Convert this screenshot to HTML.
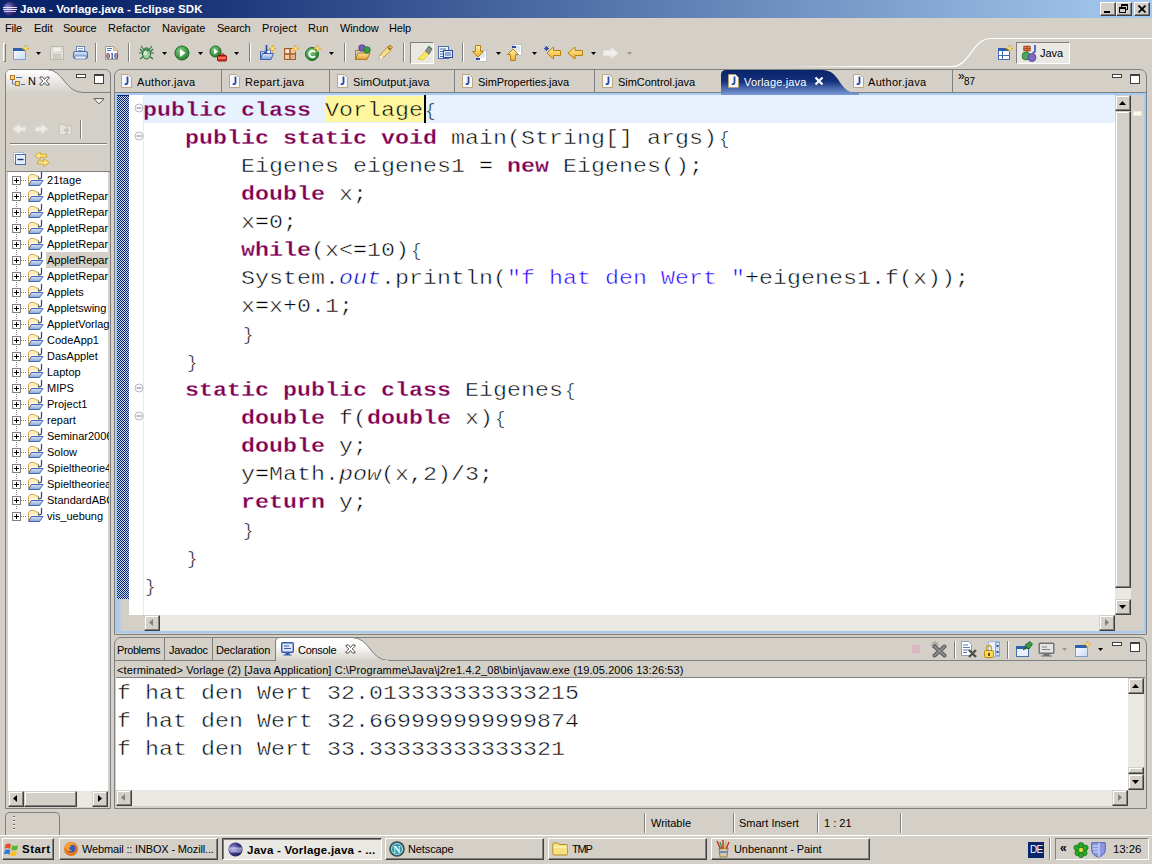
<!DOCTYPE html>
<html lang="de">
<head>
<meta charset="utf-8">
<title>Java - Vorlage.java - Eclipse SDK</title>
<style>
*{box-sizing:border-box;margin:0;padding:0}
html,body{width:1152px;height:864px;overflow:hidden;background:#d4d0c8}
body{position:relative;font-family:"Liberation Sans",sans-serif;font-size:11px;color:#000;-webkit-font-smoothing:none}
.a{position:absolute}
.t{position:absolute;white-space:pre;line-height:14px;height:14px;font-size:11px}
#title{left:0;top:0;width:1152px;height:18px;background:linear-gradient(90deg,#0a246a 0%,#0a246a 8%,#a6caf0 100%)}
#title .t{color:#fff;font-weight:bold;font-size:11.5px;left:20px;top:2px}
.wb{position:absolute;top:2px;width:16px;height:14px;background:#d4d0c8;border:1px solid;border-color:#fff #404040 #404040 #fff;box-shadow:inset -1px -1px 0 #808080}
.menu .t{top:21px;font-size:11px}
.sep{position:absolute;width:2px;border-left:1px solid #808080;border-right:1px solid #fff}
.code{position:absolute;white-space:pre;font-family:"Liberation Mono",monospace;font-size:23.33px;line-height:28px;height:28px;color:#000;transform:scaleY(.84);transform-origin:0 20.6px;-webkit-text-stroke:.55px #fff}
.k{color:#7f0055;font-weight:bold;-webkit-text-stroke-width:.3px}
.b{display:inline-block;width:14px;text-align:center;transform:scale(.72,.95);transform-origin:60% 70%}
.s{color:#2a00ff}
.i{font-style:italic}
.f{color:#0000c0;font-style:italic}
.btn{position:absolute;background:#d4d0c8;border:1px solid;border-color:#fff #404040 #404040 #fff;box-shadow:inset -1px -1px 0 #808080,inset 1px 1px 0 #d4d0c8}
.sbtn{position:absolute;width:16px;height:16px;background:#d4d0c8;border:1px solid;border-color:#d4d0c8 #404040 #404040 #d4d0c8;box-shadow:inset -1px -1px 0 #808080,inset 1px 1px 0 #fff}
.track{position:absolute;background:#eae8e3}
.tri{position:absolute;width:0;height:0}
.tree .t{font-size:11px}
</style>
</head>
<body>

<!-- ===== TITLE BAR ===== -->
<div id="title" class="a">
  <svg class="a" style="left:2px;top:1px" width="16" height="16" viewBox="0 0 16 16">
    <defs><radialGradient id="eg" cx="35%" cy="40%" r="70%"><stop offset="0" stop-color="#9a96e0"/><stop offset="0.55" stop-color="#3e388c"/><stop offset="1" stop-color="#1c1850"/></radialGradient></defs>
    <circle cx="8" cy="8" r="7" fill="url(#eg)"/>
    <rect x="1" y="6" width="14" height="1" fill="#e8e6f8"/><rect x="1" y="8" width="14" height="1" fill="#e8e6f8"/><rect x="2" y="10" width="12" height="1" fill="#cfcbee"/>
  </svg>
  <div class="t" style="left:20px;letter-spacing:0.055px">Java - Vorlage.java - Eclipse SDK</div>
  <div class="wb" style="left:1100px"><div class="a" style="left:3px;top:8px;width:6px;height:2px;background:#000"></div></div>
  <div class="wb" style="left:1116px">
    <div class="a" style="left:4px;top:1px;width:7px;height:6px;border:1px solid #000;border-top-width:2px"></div>
    <div class="a" style="left:2px;top:4px;width:7px;height:6px;border:1px solid #000;border-top-width:2px;background:#d4d0c8"></div>
  </div>
  <div class="wb" style="left:1134px">
    <svg class="a" style="left:3px;top:2px" width="9" height="8" viewBox="0 0 9 8"><path d="M0.5 0.5 L7.5 7.5 M7.5 0.5 L0.5 7.5" stroke="#000" stroke-width="1.8"/></svg>
  </div>
</div>

<!-- ===== MENU BAR ===== -->
<div class="menu">
  <div class="t" style="left:5px;letter-spacing:-0.184px">File</div>
  <div class="t" style="left:34px;letter-spacing:-0.067px">Edit</div>
  <div class="t" style="left:63px;letter-spacing:-0.227px">Source</div>
  <div class="t" style="left:108px;letter-spacing:0.115px">Refactor</div>
  <div class="t" style="left:162px">Navigate</div>
  <div class="t" style="left:217px;letter-spacing:-0.227px">Search</div>
  <div class="t" style="left:262px;letter-spacing:0.107px">Project</div>
  <div class="t" style="left:308px;letter-spacing:0.104px">Run</div>
  <div class="t" style="left:340px;letter-spacing:-0.104px">Window</div>
  <div class="t" style="left:389px;letter-spacing:-0.156px">Help</div>
</div>

<!-- TOOLBAR -->
<div id="toolbar">
  <svg width="0" height="0" style="position:absolute">
    <defs>
      <linearGradient id="gWin" x1="0" y1="0" x2="1" y2="1"><stop offset="0" stop-color="#ffffff"/><stop offset="1" stop-color="#c8dcf4"/></linearGradient>
      <linearGradient id="gYel" x1="0" y1="0" x2="0" y2="1"><stop offset="0" stop-color="#fff2a8"/><stop offset="1" stop-color="#f0b030"/></linearGradient>
      <radialGradient id="gGrn" cx="40%" cy="35%" r="70%"><stop offset="0" stop-color="#7fd27f"/><stop offset="1" stop-color="#1f7a2a"/></radialGradient>
      <linearGradient id="gFold" x1="0" y1="0" x2="0" y2="1"><stop offset="0" stop-color="#fbe29a"/><stop offset="1" stop-color="#e0a030"/></linearGradient>
      <linearGradient id="gBlue" x1="0" y1="0" x2="0" y2="1"><stop offset="0" stop-color="#dce9fb"/><stop offset="1" stop-color="#7ea2d8"/></linearGradient>
      <symbol id="dd" viewBox="0 0 5 3"><path d="M0 0h5L2.5 3z" fill="#000"/></symbol>
      <symbol id="spark" viewBox="0 0 7 7"><path d="M3.5 0v7M0 3.500h7" stroke="#e8b018" stroke-width="1.6"/><rect x="2.5" y="2.500" width="2" height="2" fill="#fff8c0"/></symbol>
    </defs>
  </svg>
  <!-- grip -->
  <div class="a" style="left:3px;top:43px;width:3px;height:19px;border:1px solid;border-color:#fff #808080 #808080 #fff"></div>
  <!-- new wizard -->
  <svg class="a" style="left:12px;top:45px" width="17" height="16" viewBox="0 0 17 16">
    <rect x="1.5" y="3.500" width="12" height="11" fill="url(#gWin)" stroke="#7f9fc8"/>
    <rect x="1" y="3" width="13" height="3" fill="#2f5fb0"/>
    <use href="#spark" x="10" y="0" width="7" height="7"/>
  </svg>
  <svg class="a" style="left:36px;top:52px" width="5" height="3"><use href="#dd" width="5" height="3"/></svg>
  <!-- save (disabled) -->
  <svg class="a" style="left:50px;top:46px" width="14" height="14" viewBox="0 0 14 14">
    <rect x="0.5" y="0.500" width="13" height="13" fill="#e4e2dc" stroke="#b8b5ac"/>
    <rect x="3" y="1" width="8" height="5" fill="#f4f3ef" stroke="#c4c1b8" stroke-width=".6"/>
    <rect x="3.5" y="8.500" width="7" height="5" fill="#cfccc4" stroke="#b8b5ac" stroke-width=".6"/>
  </svg>
  <!-- print -->
  <svg class="a" style="left:72px;top:45px" width="17" height="16" viewBox="0 0 17 16">
    <rect x="4.500" y="1.500" width="8" height="6" fill="#fff" stroke="#7088b8"/>
    <path d="M6 3.500h5M6 5.500h5" stroke="#8ea4cc" stroke-width="1"/>
    <rect x="1.500" y="6.500" width="14" height="7" rx="1.500" fill="url(#gBlue)" stroke="#4a6cb0"/>
    <rect x="3" y="11" width="11" height="3" fill="#e8f0fc" stroke="#5878b8" stroke-width=".7"/>
  </svg>
  <div class="sep" style="left:95px;top:43px;height:19px"></div>
  <!-- binary -->
  <svg class="a" style="left:104px;top:45px" width="15" height="16" viewBox="0 0 15 16">
    <path d="M1.500 1.500h8l4 4v9h-12z" fill="#fff" stroke="#9a9a9a"/>
    <path d="M9.500 1.500v4h4" fill="#e8d8a0" stroke="#c8a850" stroke-width=".8"/>
    <path d="M3 3.500h5M3 5.500h4" stroke="#4a78c0" stroke-width="1"/>
    <text x="2" y="13.500" font-family="Liberation Serif,serif" font-weight="bold" font-size="8" fill="#1a3a8a">010</text>
  </svg>
  <div class="sep" style="left:128px;top:43px;height:19px"></div>
  <!-- debug bug -->
  <svg class="a" style="left:138px;top:45px" width="17" height="16" viewBox="0 0 17 16">
    <path d="M3 1l3 4M14 1l-3 4M1 8h4M12 8h4M2 14l4-3M15 14l-4-3M2 4l3 3M15 4l-3 3" stroke="#2a6a3a" stroke-width="1.100" fill="none"/>
    <ellipse cx="8.500" cy="9" rx="4" ry="5" fill="#9fd0a0" stroke="#2a6a3a"/>
    <ellipse cx="8.500" cy="4.500" rx="2.200" ry="1.800" fill="#4a9a5a" stroke="#2a6a3a" stroke-width=".8"/>
    <ellipse cx="7.500" cy="8" rx="1.500" ry="2.500" fill="#d8f0d8"/>
  </svg>
  <svg class="a" style="left:162px;top:52px" width="5" height="3"><use href="#dd" width="5" height="3"/></svg>
  <!-- run -->
  <svg class="a" style="left:174px;top:45px" width="16" height="16" viewBox="0 0 16 16">
    <circle cx="8" cy="8" r="7" fill="url(#gGrn)" stroke="#1a6a24"/>
    <path d="M6 4l5.500 4L6 12z" fill="#fff"/>
  </svg>
  <svg class="a" style="left:198px;top:52px" width="5" height="3"><use href="#dd" width="5" height="3"/></svg>
  <!-- external tools -->
  <svg class="a" style="left:209px;top:45px" width="18" height="17" viewBox="0 0 18 17">
    <circle cx="6.500" cy="6.500" r="5.500" fill="url(#gGrn)" stroke="#1a6a24"/>
    <path d="M5 3.500l4 3-4 3z" fill="#fff"/>
    <rect x="8.500" y="10.500" width="9" height="5.500" rx="1" fill="#e03020" stroke="#8a1810"/>
    <path d="M11 10.500v-1.500h4v1.500" fill="none" stroke="#8a1810"/>
    <rect x="9" y="12.500" width="8" height="1" fill="#f8b0a0"/>
  </svg>
  <svg class="a" style="left:234px;top:52px" width="5" height="3"><use href="#dd" width="5" height="3"/></svg>
  <div class="sep" style="left:249px;top:43px;height:19px"></div>
  <!-- new java project -->
  <svg class="a" style="left:259px;top:44px" width="17" height="17" viewBox="0 0 17 17">
    <path d="M1.500 7.500h4l1-1.500h5v3" fill="#fff" stroke="#5a7ec0"/>
    <path d="M1.500 15.500l2-6h11l-2.500 6z" fill="url(#gBlue)" stroke="#3a62b0"/>
    <path d="M1.500 15.500v-8" stroke="#3a62b0"/>
    <path d="M7.500 1v6q0 2-2.500 1.500" fill="none" stroke="#2a4aa0" stroke-width="1.600"/>
    <use href="#spark" x="10" y="1" width="7" height="7"/>
  </svg>
  <!-- new package -->
  <svg class="a" style="left:283px;top:45px" width="16" height="16" viewBox="0 0 16 16">
    <rect x="1.500" y="3.500" width="11" height="11" fill="#f0c8a0" stroke="#a05a28"/>
    <path d="M7 3.500v11M1.500 9h11" stroke="#a05a28" stroke-width="1.400"/>
    <rect x="3" y="5" width="3" height="3" fill="#fbe8d4"/><rect x="8.500" y="10.500" width="3" height="3" fill="#e0a878"/>
    <use href="#spark" x="9" y="0" width="7" height="7"/>
  </svg>
  <!-- new class -->
  <svg class="a" style="left:305px;top:45px" width="16" height="16" viewBox="0 0 16 16">
    <circle cx="7" cy="9" r="6.500" fill="url(#gGrn)" stroke="#1a6a24"/>
    <path d="M10 7a3.200 3.200 0 1 0 0 4" fill="none" stroke="#fff" stroke-width="2"/>
    <use href="#spark" x="9" y="0" width="7" height="7"/>
  </svg>
  <svg class="a" style="left:329px;top:52px" width="5" height="3"><use href="#dd" width="5" height="3"/></svg>
  <div class="sep" style="left:344px;top:43px;height:19px"></div>
  <!-- open type -->
  <svg class="a" style="left:354px;top:44px" width="18" height="17" viewBox="0 0 18 17">
    <path d="M1.500 6.500h4l1-1.500h6v3" fill="#f8d880" stroke="#b07a18"/>
    <path d="M1.500 15.500l2.500-6.500h12l-3 6.500z" fill="url(#gFold)" stroke="#b07a18"/>
    <path d="M1.500 15.500v-9" stroke="#b07a18"/>
    <circle cx="8" cy="4" r="3.300" fill="#7a5ab8" stroke="#4a3088" stroke-width=".7"/>
    <circle cx="13" cy="6" r="3.300" fill="#3a9a4a" stroke="#1a6a24" stroke-width=".7"/>
  </svg>
  <!-- search torch -->
  <svg class="a" style="left:377px;top:44px" width="17" height="18" viewBox="0 0 17 18">
    <path d="M2 15l2-5 6.500-7 3.500 3.500-7 6.500z" fill="#f8dc90" stroke="#b88a30" stroke-width=".9"/>
    <path d="M10.500 3l1.500-1.500q2.500-.5 3.500 2l-1.500 2z" fill="#e8b050" stroke="#a87020" stroke-width=".9"/>
    <path d="M2 15l1.500-3.500 2.500 2.500z" fill="#fff"/>
    <circle cx="12.200" cy="4.800" r="1" fill="#805010"/>
  </svg>
  <div class="sep" style="left:403px;top:43px;height:19px"></div>
  <!-- mark occurrences (pressed toggle) -->
  <div class="a" style="left:410px;top:42px;width:24px;height:22px;background:#eae8e3;border:1px solid;border-color:#808080 #fff #fff #808080"></div>
  <svg class="a" style="left:417px;top:45px" width="16" height="17" viewBox="0 0 16 17">
    <path d="M1 14l7.500-8 3.500 3-6 6z" fill="#f8e860" stroke="#d8c020" stroke-width=".8"/>
    <path d="M8.500 6l3-4.500 3.500 2.500-3 5z" fill="#8a9098" stroke="#5a6068" stroke-width=".8"/>
    <path d="M11.500 1.500l3.500 2.500" stroke="#3a8a4a" stroke-width="1.400"/>
  </svg>
  <!-- next icon (block selection?) -->
  <svg class="a" style="left:437px;top:45px" width="17" height="16" viewBox="0 0 17 16">
    <rect x="1.500" y="1.500" width="10" height="12" fill="#eef4fc" stroke="#4a6cb0"/>
    <path d="M3 4h6M3 6.500h3M3 9h3M3 11.500h6" stroke="#4a6cb0" stroke-width="1"/>
    <rect x="6.500" y="5.500" width="9" height="7" fill="#dce8fa" stroke="#2a4aa0"/>
    <path d="M8 8h6M8 10h6" stroke="#4a6cb0" stroke-width="1"/>
  </svg>
  <div class="sep" style="left:462px;top:43px;height:19px"></div>
  <!-- next annotation -->
  <svg class="a" style="left:471px;top:44px" width="17" height="18" viewBox="0 0 17 18">
    <rect x="6.500" y="6.500" width="9" height="11" fill="#fff" stroke="#b0b8c8" stroke-width=".8"/>
    <path d="M8 9h6M8 11h6M8 13h6" stroke="#b8c4d8" stroke-width=".8"/>
    <rect x="5" y="14" width="4" height="2" fill="#2a4aa0"/>
    <path d="M4.500 1.500h5v6h3l-5.500 5.500-5.500-5.500h3z" fill="url(#gYel)" stroke="#b88010"/>
  </svg>
  <svg class="a" style="left:496px;top:52px" width="5" height="3"><use href="#dd" width="5" height="3"/></svg>
  <!-- prev annotation -->
  <svg class="a" style="left:506px;top:44px" width="17" height="18" viewBox="0 0 17 18">
    <rect x="6.500" y="0.500" width="9" height="11" fill="#fff" stroke="#b0b8c8" stroke-width=".8"/>
    <path d="M8 3h6M8 5h6M8 7h6" stroke="#b8c4d8" stroke-width=".8"/>
    <rect x="6" y="2" width="4" height="2" fill="#2a4aa0"/>
    <path d="M4.500 16.500h5v-6h3l-5.500-5.500-5.500 5.500h3z" fill="url(#gYel)" stroke="#b88010"/>
  </svg>
  <svg class="a" style="left:532px;top:52px" width="5" height="3"><use href="#dd" width="5" height="3"/></svg>
  <!-- last edit location -->
  <svg class="a" style="left:543px;top:45px" width="18" height="16" viewBox="0 0 18 16">
    <path d="M17.500 5.500h-7v-3.500l-6.500 6 6.500 6v-3.500h7z" fill="url(#gYel)" stroke="#b88010"/>
    <path d="M1 3.500h5M3.500 1v5M1.700 1.700l3.600 3.600M5.300 1.700l-3.600 3.600" stroke="#2a4aa0" stroke-width=".9"/>
  </svg>
  <!-- back -->
  <svg class="a" style="left:567px;top:45px" width="16" height="16" viewBox="0 0 16 16">
    <path d="M15.500 5.500h-7.500v-3.500l-7 6 7 6v-3.500h7.500z" fill="url(#gYel)" stroke="#b88010"/>
  </svg>
  <svg class="a" style="left:591px;top:52px" width="5" height="3"><use href="#dd" width="5" height="3"/></svg>
  <!-- forward disabled -->
  <svg class="a" style="left:603px;top:45px" width="16" height="16" viewBox="0 0 16 16">
    <path d="M0.500 5.500h7.500v-3.500l7 6-7 6v-3.500h-7.500z" fill="#f0efeb" stroke="#e4e2dc"/>
  </svg>
  <svg class="a" style="left:627px;top:52px" width="5" height="3"><path d="M0 0h5L2.500 3z" fill="#9a968e"/></svg>
</div>


<div id="persp">
  <svg class="a" style="left:780px;top:34px" width="372" height="36" viewBox="780 34 372 36">
    <defs><linearGradient id="gFade" x1="780" y1="0" x2="860" y2="0" gradientUnits="userSpaceOnUse"><stop offset="0" stop-color="#fff" stop-opacity="0"/><stop offset="1" stop-color="#fff" stop-opacity="1"/></linearGradient></defs>
    <path d="M780 66.500H860" stroke="url(#gFade)" stroke-width="1" fill="none"/>
    <path d="M860 66.500H952C970 66.500 972 38.500 991 38.500H1152" stroke="#fff" stroke-width="1.200" fill="none"/>
  </svg>
  <!-- open perspective -->
  <svg class="a" style="left:997px;top:45px" width="16" height="16" viewBox="0 0 16 16">
    <rect x="1.500" y="3.500" width="11" height="11" fill="#fff" stroke="#4a6cb0"/>
    <rect x="1" y="3" width="12" height="3" fill="#2f5fb0"/>
    <path d="M5.500 6v8.500M1.500 10.500h11" stroke="#4a6cb0"/>
    <use href="#spark" x="9" y="0" width="7" height="7"/>
  </svg>
  <!-- Java perspective button (pressed) -->
  <div class="a" style="left:1016px;top:42px;width:54px;height:22px;background:#eae8e3;border:1px solid;border-color:#808080 #fff #fff #808080"></div>
  <svg class="a" style="left:1021px;top:44px" width="18" height="18" viewBox="0 0 18 18">
    <path d="M2 4.500h8M6 1.500v7M3 2.500v4h6v-4z" stroke="#b04a28" stroke-width="1.300" fill="none"/>
    <path d="M14 1v6q0 2-2.500 1.500" fill="none" stroke="#3a5ab8" stroke-width="1.700"/>
    <circle cx="5" cy="12" r="4" fill="#4aa85a" stroke="#1a6a24" stroke-width=".7"/>
    <circle cx="11" cy="13.500" r="4" fill="#7a6ac0" stroke="#4a3088" stroke-width=".7"/>
  </svg>
  <div class="t" style="left:1040px;top:46px;font-size:11px">Java</div>
</div>

<!-- LEFT PANEL -->
<svg width="0" height="0" style="position:absolute"><defs><symbol id="proj" viewBox="0 0 17 15">
<path d="M1.500 13V4.500L3.500 2.500H7.500L9 4H11.500V8" fill="#fdf0b8" stroke="#c8a050" stroke-width=".9"/>
<path d="M3 7.500h7" stroke="#fffbe8" stroke-width="1.500"/>
<path d="M1.700 13.500L4.300 8.500H16L12.500 13.500z" fill="url(#gBlue)" stroke="#3858a8" stroke-width=".9"/>
<path d="M14.500 0V5Q14.500 6.800 12.800 6.800 11.500 6.800 11.300 5.500" fill="none" stroke="#28408c" stroke-width="1.200"/>
</symbol></defs></svg>
<div id="left">
<div class="a" style="left:5px;top:69px;width:106px;height:740px;border:1px solid #808080;border-radius:6px 6px 0 0;background:#d4d0c8"></div>
<svg class="a" style="left:5px;top:69px" width="106" height="26" viewBox="0 0 106 26">
<defs><linearGradient id="gTabL" x1="0" y1="0" x2="0" y2="1"><stop offset="0" stop-color="#ffffff"/><stop offset="1" stop-color="#d4d0c8"/></linearGradient></defs>
<path d="M1 24V6Q1 1 6 1H42C58 1 60 23.500 78 23.500V24z" fill="url(#gTabL)"/>
<path d="M42 .5C58 .5 60 23.500 78 23.500H106" fill="none" stroke="#808080"/>
</svg>
<svg class="a" style="left:10px;top:74px" width="16" height="14" viewBox="0 0 16 14">
<rect x=".5" y="1.500" width="4" height="4" fill="#f8d880" stroke="#b07a18"/>
<rect x="5.500" y="7.500" width="4" height="4" fill="#f8d880" stroke="#b07a18"/>
<path d="M2.500 6v4h3" fill="none" stroke="#6a7a9a"/><path d="M6 3.500h6M11 10.500h4" stroke="#4a6cb0"/>
</svg>
<div class="t" style="left:28px;top:74px;font-size:11px">N</div>
<svg class="a" style="left:39px;top:76px" width="11" height="10" viewBox="0 0 11 10"><path d="M1 1h2.500l2 2.500 2-2.500H10v1.200L7.200 5 10 7.800V9H7.500l-2-2.500-2 2.500H1V7.800L3.800 5 1 2.200z" fill="#fff" stroke="#404040" stroke-width=".9"/></svg>
<div class="a" style="left:76px;top:74px;width:10px;height:4px;border:1px solid #404040;background:#fff"></div>
<div class="a" style="left:94px;top:74px;width:10px;height:10px;border:1px solid #404040;border-top-width:2px;background:#fff"></div>
<svg class="a" style="left:93px;top:98px" width="12" height="7" viewBox="0 0 12 7"><path d="M1 .7h10L6 5.800z" fill="#fff" stroke="#404040" stroke-width=".9"/></svg>
<svg class="a" style="left:12px;top:123px" width="14" height="12" viewBox="0 0 14 12"><path d="M13.500 4h-6V1L.8 6l6.700 5V8h6z" fill="#ecebe6" stroke="#e0ded8"/></svg>
<svg class="a" style="left:35px;top:123px" width="14" height="12" viewBox="0 0 14 12"><path d="M.5 4h6V1l6.700 5-6.700 5V8h-6z" fill="#ecebe6" stroke="#e0ded8"/></svg>
<svg class="a" style="left:59px;top:122px" width="14" height="14" viewBox="0 0 14 14"><path d="M.5 2.500h4l1 1.500h7v8.500h-12z" fill="#e4e2dc" stroke="#c8c5bc"/><path d="M7 12V8.500h-2l2.500-3 2.500 3h-2V12" fill="#d0cdc6" stroke="#b8b5ac" stroke-width=".7"/></svg>
<div class="sep" style="left:80px;top:120px;height:19px"></div>
<div class="a" style="left:10px;top:143px;width:97px;height:2px;border-top:1px solid #808080;border-bottom:1px solid #fff"></div>
<svg class="a" style="left:13px;top:152px" width="14" height="14" viewBox="0 0 14 14">
<rect x=".5" y=".5" width="10" height="10" fill="#fff" stroke="#a8bcd8"/>
<rect x="2.500" y="2.500" width="10" height="10" fill="#e4effc" stroke="#4a6cb0"/>
<path d="M4.500 7.500h6" stroke="#1a2a6a" stroke-width="1.400"/></svg>
<svg class="a" style="left:34px;top:151px" width="16" height="16" viewBox="0 0 16 16">
<path d="M12.500 3.200H6.200V.7L.8 4.600 6.200 8.500V6H12.500z" fill="#fde88a" stroke="#d0a020" stroke-width=".9"/>
<path d="M3.500 10.200H9.800V7.700L15.200 11.600 9.800 15.500V13H3.500z" fill="#fde88a" stroke="#d0a020" stroke-width=".9"/></svg>
<div class="a" style="left:8px;top:172px;width:100px;height:619px;background:#fff"></div>
<div class="a" style="left:7px;top:171px;width:103px;height:1px;background:#808080"></div>
<div class="a" style="left:16px;top:186px;width:1px;height:324px;background:repeating-linear-gradient(180deg,#808080 0 1px,transparent 1px 2px)"></div>
<div class="tree">
<div class="a" style="left:21px;top:180px;width:6px;height:1px;background:repeating-linear-gradient(90deg,#808080 0 1px,transparent 1px 2px)"></div>
<div class="a" style="left:12px;top:176px;width:9px;height:9px;border:1px solid #808080;background:#fff"></div>
<div class="a" style="left:14px;top:180px;width:5px;height:1px;background:#000"></div><div class="a" style="left:16px;top:178px;width:1px;height:5px;background:#000"></div>
<svg class="a" style="left:27px;top:172px" width="17" height="15" viewBox="0 0 17 15"><use href="#proj"/></svg>
<div class="t" style="left:47px;top:173px;width:62px;overflow:hidden;letter-spacing:0.141px">21tage</div>
<div class="a" style="left:21px;top:196px;width:6px;height:1px;background:repeating-linear-gradient(90deg,#808080 0 1px,transparent 1px 2px)"></div>
<div class="a" style="left:12px;top:192px;width:9px;height:9px;border:1px solid #808080;background:#fff"></div>
<div class="a" style="left:14px;top:196px;width:5px;height:1px;background:#000"></div><div class="a" style="left:16px;top:194px;width:1px;height:5px;background:#000"></div>
<svg class="a" style="left:27px;top:188px" width="17" height="15" viewBox="0 0 17 15"><use href="#proj"/></svg>
<div class="t" style="left:47px;top:189px;width:62px;overflow:hidden">AppletRepar</div>
<div class="a" style="left:21px;top:212px;width:6px;height:1px;background:repeating-linear-gradient(90deg,#808080 0 1px,transparent 1px 2px)"></div>
<div class="a" style="left:12px;top:208px;width:9px;height:9px;border:1px solid #808080;background:#fff"></div>
<div class="a" style="left:14px;top:212px;width:5px;height:1px;background:#000"></div><div class="a" style="left:16px;top:210px;width:1px;height:5px;background:#000"></div>
<svg class="a" style="left:27px;top:204px" width="17" height="15" viewBox="0 0 17 15"><use href="#proj"/></svg>
<div class="t" style="left:47px;top:205px;width:62px;overflow:hidden">AppletRepar</div>
<div class="a" style="left:21px;top:228px;width:6px;height:1px;background:repeating-linear-gradient(90deg,#808080 0 1px,transparent 1px 2px)"></div>
<div class="a" style="left:12px;top:224px;width:9px;height:9px;border:1px solid #808080;background:#fff"></div>
<div class="a" style="left:14px;top:228px;width:5px;height:1px;background:#000"></div><div class="a" style="left:16px;top:226px;width:1px;height:5px;background:#000"></div>
<svg class="a" style="left:27px;top:220px" width="17" height="15" viewBox="0 0 17 15"><use href="#proj"/></svg>
<div class="t" style="left:47px;top:221px;width:62px;overflow:hidden">AppletRepar</div>
<div class="a" style="left:21px;top:244px;width:6px;height:1px;background:repeating-linear-gradient(90deg,#808080 0 1px,transparent 1px 2px)"></div>
<div class="a" style="left:12px;top:240px;width:9px;height:9px;border:1px solid #808080;background:#fff"></div>
<div class="a" style="left:14px;top:244px;width:5px;height:1px;background:#000"></div><div class="a" style="left:16px;top:242px;width:1px;height:5px;background:#000"></div>
<svg class="a" style="left:27px;top:236px" width="17" height="15" viewBox="0 0 17 15"><use href="#proj"/></svg>
<div class="t" style="left:47px;top:237px;width:62px;overflow:hidden">AppletRepar</div>
<div class="a" style="left:46px;top:252px;width:63px;height:16px;background:#d4d0c8"></div>
<div class="a" style="left:21px;top:260px;width:6px;height:1px;background:repeating-linear-gradient(90deg,#808080 0 1px,transparent 1px 2px)"></div>
<div class="a" style="left:12px;top:256px;width:9px;height:9px;border:1px solid #808080;background:#fff"></div>
<div class="a" style="left:14px;top:260px;width:5px;height:1px;background:#000"></div><div class="a" style="left:16px;top:258px;width:1px;height:5px;background:#000"></div>
<svg class="a" style="left:27px;top:252px" width="17" height="15" viewBox="0 0 17 15"><use href="#proj"/></svg>
<div class="t" style="left:47px;top:253px;width:62px;overflow:hidden">AppletRepar</div>
<div class="a" style="left:21px;top:276px;width:6px;height:1px;background:repeating-linear-gradient(90deg,#808080 0 1px,transparent 1px 2px)"></div>
<div class="a" style="left:12px;top:272px;width:9px;height:9px;border:1px solid #808080;background:#fff"></div>
<div class="a" style="left:14px;top:276px;width:5px;height:1px;background:#000"></div><div class="a" style="left:16px;top:274px;width:1px;height:5px;background:#000"></div>
<svg class="a" style="left:27px;top:268px" width="17" height="15" viewBox="0 0 17 15"><use href="#proj"/></svg>
<div class="t" style="left:47px;top:269px;width:62px;overflow:hidden">AppletRepar</div>
<div class="a" style="left:21px;top:292px;width:6px;height:1px;background:repeating-linear-gradient(90deg,#808080 0 1px,transparent 1px 2px)"></div>
<div class="a" style="left:12px;top:288px;width:9px;height:9px;border:1px solid #808080;background:#fff"></div>
<div class="a" style="left:14px;top:292px;width:5px;height:1px;background:#000"></div><div class="a" style="left:16px;top:290px;width:1px;height:5px;background:#000"></div>
<svg class="a" style="left:27px;top:284px" width="17" height="15" viewBox="0 0 17 15"><use href="#proj"/></svg>
<div class="t" style="left:47px;top:285px;width:62px;overflow:hidden">Applets</div>
<div class="a" style="left:21px;top:308px;width:6px;height:1px;background:repeating-linear-gradient(90deg,#808080 0 1px,transparent 1px 2px)"></div>
<div class="a" style="left:12px;top:304px;width:9px;height:9px;border:1px solid #808080;background:#fff"></div>
<div class="a" style="left:14px;top:308px;width:5px;height:1px;background:#000"></div><div class="a" style="left:16px;top:306px;width:1px;height:5px;background:#000"></div>
<svg class="a" style="left:27px;top:300px" width="17" height="15" viewBox="0 0 17 15"><use href="#proj"/></svg>
<div class="t" style="left:47px;top:301px;width:62px;overflow:hidden">Appletswing</div>
<div class="a" style="left:21px;top:324px;width:6px;height:1px;background:repeating-linear-gradient(90deg,#808080 0 1px,transparent 1px 2px)"></div>
<div class="a" style="left:12px;top:320px;width:9px;height:9px;border:1px solid #808080;background:#fff"></div>
<div class="a" style="left:14px;top:324px;width:5px;height:1px;background:#000"></div><div class="a" style="left:16px;top:322px;width:1px;height:5px;background:#000"></div>
<svg class="a" style="left:27px;top:316px" width="17" height="15" viewBox="0 0 17 15"><use href="#proj"/></svg>
<div class="t" style="left:47px;top:317px;width:62px;overflow:hidden">AppletVorlag</div>
<div class="a" style="left:21px;top:340px;width:6px;height:1px;background:repeating-linear-gradient(90deg,#808080 0 1px,transparent 1px 2px)"></div>
<div class="a" style="left:12px;top:336px;width:9px;height:9px;border:1px solid #808080;background:#fff"></div>
<div class="a" style="left:14px;top:340px;width:5px;height:1px;background:#000"></div><div class="a" style="left:16px;top:338px;width:1px;height:5px;background:#000"></div>
<svg class="a" style="left:27px;top:332px" width="17" height="15" viewBox="0 0 17 15"><use href="#proj"/></svg>
<div class="t" style="left:47px;top:333px;width:62px;overflow:hidden">CodeApp1</div>
<div class="a" style="left:21px;top:356px;width:6px;height:1px;background:repeating-linear-gradient(90deg,#808080 0 1px,transparent 1px 2px)"></div>
<div class="a" style="left:12px;top:352px;width:9px;height:9px;border:1px solid #808080;background:#fff"></div>
<div class="a" style="left:14px;top:356px;width:5px;height:1px;background:#000"></div><div class="a" style="left:16px;top:354px;width:1px;height:5px;background:#000"></div>
<svg class="a" style="left:27px;top:348px" width="17" height="15" viewBox="0 0 17 15"><use href="#proj"/></svg>
<div class="t" style="left:47px;top:349px;width:62px;overflow:hidden">DasApplet</div>
<div class="a" style="left:21px;top:372px;width:6px;height:1px;background:repeating-linear-gradient(90deg,#808080 0 1px,transparent 1px 2px)"></div>
<div class="a" style="left:12px;top:368px;width:9px;height:9px;border:1px solid #808080;background:#fff"></div>
<div class="a" style="left:14px;top:372px;width:5px;height:1px;background:#000"></div><div class="a" style="left:16px;top:370px;width:1px;height:5px;background:#000"></div>
<svg class="a" style="left:27px;top:364px" width="17" height="15" viewBox="0 0 17 15"><use href="#proj"/></svg>
<div class="t" style="left:47px;top:365px;width:62px;overflow:hidden">Laptop</div>
<div class="a" style="left:21px;top:388px;width:6px;height:1px;background:repeating-linear-gradient(90deg,#808080 0 1px,transparent 1px 2px)"></div>
<div class="a" style="left:12px;top:384px;width:9px;height:9px;border:1px solid #808080;background:#fff"></div>
<div class="a" style="left:14px;top:388px;width:5px;height:1px;background:#000"></div><div class="a" style="left:16px;top:386px;width:1px;height:5px;background:#000"></div>
<svg class="a" style="left:27px;top:380px" width="17" height="15" viewBox="0 0 17 15"><use href="#proj"/></svg>
<div class="t" style="left:47px;top:381px;width:62px;overflow:hidden">MIPS</div>
<div class="a" style="left:21px;top:404px;width:6px;height:1px;background:repeating-linear-gradient(90deg,#808080 0 1px,transparent 1px 2px)"></div>
<div class="a" style="left:12px;top:400px;width:9px;height:9px;border:1px solid #808080;background:#fff"></div>
<div class="a" style="left:14px;top:404px;width:5px;height:1px;background:#000"></div><div class="a" style="left:16px;top:402px;width:1px;height:5px;background:#000"></div>
<svg class="a" style="left:27px;top:396px" width="17" height="15" viewBox="0 0 17 15"><use href="#proj"/></svg>
<div class="t" style="left:47px;top:397px;width:62px;overflow:hidden">Project1</div>
<div class="a" style="left:21px;top:420px;width:6px;height:1px;background:repeating-linear-gradient(90deg,#808080 0 1px,transparent 1px 2px)"></div>
<div class="a" style="left:12px;top:416px;width:9px;height:9px;border:1px solid #808080;background:#fff"></div>
<div class="a" style="left:14px;top:420px;width:5px;height:1px;background:#000"></div><div class="a" style="left:16px;top:418px;width:1px;height:5px;background:#000"></div>
<svg class="a" style="left:27px;top:412px" width="17" height="15" viewBox="0 0 17 15"><use href="#proj"/></svg>
<div class="t" style="left:47px;top:413px;width:62px;overflow:hidden">repart</div>
<div class="a" style="left:21px;top:436px;width:6px;height:1px;background:repeating-linear-gradient(90deg,#808080 0 1px,transparent 1px 2px)"></div>
<div class="a" style="left:12px;top:432px;width:9px;height:9px;border:1px solid #808080;background:#fff"></div>
<div class="a" style="left:14px;top:436px;width:5px;height:1px;background:#000"></div><div class="a" style="left:16px;top:434px;width:1px;height:5px;background:#000"></div>
<svg class="a" style="left:27px;top:428px" width="17" height="15" viewBox="0 0 17 15"><use href="#proj"/></svg>
<div class="t" style="left:47px;top:429px;width:62px;overflow:hidden">Seminar2006</div>
<div class="a" style="left:21px;top:452px;width:6px;height:1px;background:repeating-linear-gradient(90deg,#808080 0 1px,transparent 1px 2px)"></div>
<div class="a" style="left:12px;top:448px;width:9px;height:9px;border:1px solid #808080;background:#fff"></div>
<div class="a" style="left:14px;top:452px;width:5px;height:1px;background:#000"></div><div class="a" style="left:16px;top:450px;width:1px;height:5px;background:#000"></div>
<svg class="a" style="left:27px;top:444px" width="17" height="15" viewBox="0 0 17 15"><use href="#proj"/></svg>
<div class="t" style="left:47px;top:445px;width:62px;overflow:hidden">Solow</div>
<div class="a" style="left:21px;top:468px;width:6px;height:1px;background:repeating-linear-gradient(90deg,#808080 0 1px,transparent 1px 2px)"></div>
<div class="a" style="left:12px;top:464px;width:9px;height:9px;border:1px solid #808080;background:#fff"></div>
<div class="a" style="left:14px;top:468px;width:5px;height:1px;background:#000"></div><div class="a" style="left:16px;top:466px;width:1px;height:5px;background:#000"></div>
<svg class="a" style="left:27px;top:460px" width="17" height="15" viewBox="0 0 17 15"><use href="#proj"/></svg>
<div class="t" style="left:47px;top:461px;width:62px;overflow:hidden">Spieltheorie4</div>
<div class="a" style="left:21px;top:484px;width:6px;height:1px;background:repeating-linear-gradient(90deg,#808080 0 1px,transparent 1px 2px)"></div>
<div class="a" style="left:12px;top:480px;width:9px;height:9px;border:1px solid #808080;background:#fff"></div>
<div class="a" style="left:14px;top:484px;width:5px;height:1px;background:#000"></div><div class="a" style="left:16px;top:482px;width:1px;height:5px;background:#000"></div>
<svg class="a" style="left:27px;top:476px" width="17" height="15" viewBox="0 0 17 15"><use href="#proj"/></svg>
<div class="t" style="left:47px;top:477px;width:62px;overflow:hidden">Spieltheoriea</div>
<div class="a" style="left:21px;top:500px;width:6px;height:1px;background:repeating-linear-gradient(90deg,#808080 0 1px,transparent 1px 2px)"></div>
<div class="a" style="left:12px;top:496px;width:9px;height:9px;border:1px solid #808080;background:#fff"></div>
<div class="a" style="left:14px;top:500px;width:5px;height:1px;background:#000"></div><div class="a" style="left:16px;top:498px;width:1px;height:5px;background:#000"></div>
<svg class="a" style="left:27px;top:492px" width="17" height="15" viewBox="0 0 17 15"><use href="#proj"/></svg>
<div class="t" style="left:47px;top:493px;width:62px;overflow:hidden">StandardABC</div>
<div class="a" style="left:21px;top:516px;width:6px;height:1px;background:repeating-linear-gradient(90deg,#808080 0 1px,transparent 1px 2px)"></div>
<div class="a" style="left:12px;top:512px;width:9px;height:9px;border:1px solid #808080;background:#fff"></div>
<div class="a" style="left:14px;top:516px;width:5px;height:1px;background:#000"></div><div class="a" style="left:16px;top:514px;width:1px;height:5px;background:#000"></div>
<svg class="a" style="left:27px;top:508px" width="17" height="15" viewBox="0 0 17 15"><use href="#proj"/></svg>
<div class="t" style="left:47px;top:509px;width:62px;overflow:hidden;letter-spacing:-0.028px">vis_uebung</div>
</div>
<div class="track" style="left:8px;top:791px;width:100px;height:16px"></div>
<div class="sbtn" style="left:8px;top:791px"><svg class="a" style="left:4px;top:3px" width="4" height="7"><path d="M4 0v7L0 3.500z" fill="#000"/></svg></div>
<div class="sbtn" style="left:24px;top:791px;width:53px"></div>
<div class="sbtn" style="left:92px;top:791px"><svg class="a" style="left:5px;top:3px" width="4" height="7"><path d="M0 0v7L4 3.500z" fill="#000"/></svg></div>
</div>

<!-- EDITOR -->
<div id="editor">
<div class="a" style="left:114px;top:69px;width:1033px;height:566px;border:1px solid #808080;border-radius:7px 7px 0 0;background:#d4d0c8"></div>
<div class="a" style="left:115px;top:92px;width:1031px;height:1px;background:#808080"></div>
<div class="a" style="left:115px;top:93px;width:1031px;height:540px;background:#a6caf0"></div>
<div class="a" style="left:117px;top:95px;width:1027px;height:536px;background:#d4d0c8"></div>
<div class="a" style="left:117px;top:599px;width:6px;height:32px;background:linear-gradient(90deg,#a6caf0,#d4d0c8)"></div>
<div class="a" style="left:117px;top:95px;width:12px;height:504px;background:conic-gradient(#0a246a 25%,#c4d8f6 0 50%,#0a246a 0 75%,#c4d8f6 0) 0 0/2px 2px;border-top:1px solid #0a246a"></div>
<div class="a" style="left:129px;top:95px;width:986px;height:520px;background:#fff"></div>
<div class="a" style="left:143px;top:95px;width:1px;height:520px;background:#ece9e2"></div>
<div class="a" style="left:144px;top:95px;width:971px;height:28px;background:#e8f2fe"></div>
<div class="a" style="left:326px;top:96px;width:98px;height:26px;background:#fff7a0"></div>
<div class="a" style="left:424px;top:95px;width:2px;height:28px;background:#000"></div>
<svg class="a" style="left:134px;top:103px" width="10" height="10" viewBox="0 0 10 10"><circle cx="5" cy="5" r="4" fill="#fbfcff" stroke="#b4b8c0" stroke-width="1"/><path d="M2.500 5h5" stroke="#787c84" stroke-width="1"/></svg>
<svg class="a" style="left:134px;top:131px" width="10" height="10" viewBox="0 0 10 10"><circle cx="5" cy="5" r="4" fill="#fbfcff" stroke="#b4b8c0" stroke-width="1"/><path d="M2.500 5h5" stroke="#787c84" stroke-width="1"/></svg>
<svg class="a" style="left:134px;top:383px" width="10" height="10" viewBox="0 0 10 10"><circle cx="5" cy="5" r="4" fill="#fbfcff" stroke="#b4b8c0" stroke-width="1"/><path d="M2.500 5h5" stroke="#787c84" stroke-width="1"/></svg>
<svg class="a" style="left:134px;top:411px" width="10" height="10" viewBox="0 0 10 10"><circle cx="5" cy="5" r="4" fill="#fbfcff" stroke="#b4b8c0" stroke-width="1"/><path d="M2.500 5h5" stroke="#787c84" stroke-width="1"/></svg>
<div class="code" style="left:143px;top:96px;-webkit-text-stroke-color:#e8f2fe"><span class="k">public</span> <span class="k">class</span> <span style="-webkit-text-stroke-color:#fff7a0">Vorlage</span><span class="b">{</span></div>
<div class="code" style="left:185px;top:124px"><span class="k">public</span> <span class="k">static</span> <span class="k">void</span> main(String[] args)<span class="b">{</span></div>
<div class="code" style="left:241px;top:152px">Eigenes eigenes1 = <span class="k">new</span> Eigenes();</div>
<div class="code" style="left:241px;top:180px"><span class="k">double</span> x;</div>
<div class="code" style="left:241px;top:208px">x=0;</div>
<div class="code" style="left:241px;top:236px"><span class="k">while</span>(x&lt;=10)<span class="b">{</span></div>
<div class="code" style="left:241px;top:264px">System.<span class="f">out</span>.println(<span class="s">"f hat den Wert "</span>+eigenes1.f(x));</div>
<div class="code" style="left:241px;top:292px">x=x+0.1;</div>
<div class="code" style="left:241px;top:320px"><span class="b">}</span></div>
<div class="code" style="left:185px;top:348px"><span class="b">}</span></div>
<div class="code" style="left:185px;top:376px"><span class="k">static</span> <span class="k">public</span> <span class="k">class</span> Eigenes<span class="b">{</span></div>
<div class="code" style="left:241px;top:404px"><span class="k">double</span> f(<span class="k">double</span> x)<span class="b">{</span></div>
<div class="code" style="left:241px;top:432px"><span class="k">double</span> y;</div>
<div class="code" style="left:241px;top:460px">y=Math.<span class="i">pow</span>(x,2)/3;</div>
<div class="code" style="left:241px;top:488px"><span class="k">return</span> y;</div>
<div class="code" style="left:241px;top:516px"><span class="b">}</span></div>
<div class="code" style="left:185px;top:544px"><span class="b">}</span></div>
<div class="code" style="left:143px;top:572px"><span class="b">}</span></div>
<div class="track" style="left:1115px;top:95px;width:16px;height:520px"></div>
<div class="sbtn" style="left:1115px;top:95px"><svg class="a" style="left:3px;top:5px" width="7" height="4"><path d="M0 4h7L3.500 0z" fill="#000"/></svg></div>
<div class="sbtn" style="left:1115px;top:111px;height:477px"></div>
<div class="sbtn" style="left:1115px;top:599px"><svg class="a" style="left:3px;top:5px" width="7" height="4"><path d="M0 0h7L3.500 4z" fill="#000"/></svg></div>
<div class="a" style="left:1131px;top:95px;width:12px;height:536px;background:#d4d0c8"></div>
<div class="a" style="left:1133px;top:111px;width:9px;height:5px;background:#fdfde8;border:1px solid #ece8d8"></div>
<div class="track" style="left:144px;top:615px;width:971px;height:16px"></div>
<div class="sbtn" style="left:144px;top:615px"><svg class="a" style="left:4px;top:3px" width="4" height="7"><path d="M4 0v7L0 3.500z" fill="#808080"/></svg></div>
<div class="sbtn" style="left:1099px;top:615px"><svg class="a" style="left:5px;top:3px" width="4" height="7"><path d="M0 0v7L4 3.500z" fill="#808080"/></svg></div>
<div class="a" style="left:1115px;top:615px;width:16px;height:16px;background:#d4d0c8"></div>
<svg class="a" style="left:121px;top:74px" width="11" height="14" viewBox="0 0 11 14"><path d="M.5 .5h7l3 3v10h-10z" fill="#f4f8fd" stroke="#b8a070" stroke-width=".9"/><path d="M6.500 2.500v6q0 2-2.800 1.600" fill="none" stroke="#2a4898" stroke-width="1.800"/></svg>
<div class="t" style="left:137px;top:75px;letter-spacing:0.314px">Author.java</div>
<div class="a" style="left:221px;top:70px;width:1px;height:22px;background:#808080"></div>
<svg class="a" style="left:229px;top:74px" width="11" height="14" viewBox="0 0 11 14"><path d="M.5 .5h7l3 3v10h-10z" fill="#f4f8fd" stroke="#b8a070" stroke-width=".9"/><path d="M6.500 2.500v6q0 2-2.800 1.600" fill="none" stroke="#2a4898" stroke-width="1.800"/></svg>
<div class="t" style="left:245px;top:75px;letter-spacing:0.294px">Repart.java</div>
<div class="a" style="left:329px;top:70px;width:1px;height:22px;background:#808080"></div>
<svg class="a" style="left:337px;top:74px" width="11" height="14" viewBox="0 0 11 14"><path d="M.5 .5h7l3 3v10h-10z" fill="#f4f8fd" stroke="#b8a070" stroke-width=".9"/><path d="M6.500 2.500v6q0 2-2.800 1.600" fill="none" stroke="#2a4898" stroke-width="1.800"/></svg>
<div class="t" style="left:353px;top:75px;letter-spacing:0.093px">SimOutput.java</div>
<div class="a" style="left:454px;top:70px;width:1px;height:22px;background:#808080"></div>
<svg class="a" style="left:462px;top:74px" width="11" height="14" viewBox="0 0 11 14"><path d="M.5 .5h7l3 3v10h-10z" fill="#f4f8fd" stroke="#b8a070" stroke-width=".9"/><path d="M6.500 2.500v6q0 2-2.800 1.600" fill="none" stroke="#2a4898" stroke-width="1.800"/></svg>
<div class="t" style="left:478px;top:75px;letter-spacing:-0.074px">SimProperties.java</div>
<div class="a" style="left:594px;top:70px;width:1px;height:22px;background:#808080"></div>
<svg class="a" style="left:602px;top:74px" width="11" height="14" viewBox="0 0 11 14"><path d="M.5 .5h7l3 3v10h-10z" fill="#f4f8fd" stroke="#b8a070" stroke-width=".9"/><path d="M6.500 2.500v6q0 2-2.800 1.600" fill="none" stroke="#2a4898" stroke-width="1.800"/></svg>
<div class="t" style="left:618px;top:75px;letter-spacing:-0.043px">SimControl.java</div>
<svg class="a" style="left:719px;top:69px" width="140" height="26" viewBox="0 0 140 26">
<defs><linearGradient id="gAct" x1="0" y1="0" x2="0" y2="1"><stop offset="0" stop-color="#0a246a"/><stop offset=".45" stop-color="#15307a"/><stop offset="1" stop-color="#7a9cd8"/></linearGradient></defs>
<path d="M2 26V6Q2 1 7 1H103C122 1 119 24 138 24H140V26z" fill="url(#gAct)"/>
</svg>
<svg class="a" style="left:728px;top:74px" width="11" height="14" viewBox="0 0 11 14"><path d="M.5 .5h7l3 3v10h-10z" fill="#f4f8fd" stroke="#b8a070" stroke-width=".9"/><path d="M6.500 2.500v6q0 2-2.800 1.600" fill="none" stroke="#2a4898" stroke-width="1.800"/></svg>
<div class="t" style="left:744px;top:75px;color:#fff;letter-spacing:0.163px">Vorlage.java</div>
<svg class="a" style="left:814px;top:76px" width="10" height="10" viewBox="0 0 10 10"><path d="M1.500 1.500l7 7M8.500 1.500l-7 7" stroke="#fff" stroke-width="2.200"/></svg>
<svg class="a" style="left:853px;top:74px" width="11" height="14" viewBox="0 0 11 14"><path d="M.5 .5h7l3 3v10h-10z" fill="#f4f8fd" stroke="#b8a070" stroke-width=".9"/><path d="M6.500 2.500v6q0 2-2.800 1.600" fill="none" stroke="#2a4898" stroke-width="1.800"/></svg>
<div class="t" style="left:868px;top:75px;letter-spacing:0.314px">Author.java</div>
<div class="a" style="left:952px;top:70px;width:1px;height:22px;background:#808080"></div>
<div class="t" style="left:958px;top:69px;font-size:12px">»</div>
<div class="t" style="left:964px;top:75px;font-size:10px">87</div>
<div class="a" style="left:1112px;top:74px;width:10px;height:4px;border:1px solid #404040;background:#fff"></div>
<div class="a" style="left:1130px;top:74px;width:10px;height:10px;border:1px solid #404040;border-top-width:2px;background:#fff"></div>
</div>

<!-- BOTTOM PANEL -->
<div id="bottom">
<div class="a" style="left:114px;top:637px;width:1033px;height:172px;border:1px solid #808080;border-radius:7px 7px 0 0;background:#d4d0c8"></div>
<div class="a" style="left:115px;top:660px;width:1031px;height:1px;background:#808080"></div>
<div class="t" style="left:117px;top:643px;letter-spacing:-0.409px">Problems</div>
<div class="t" style="left:169px;top:643px;letter-spacing:-0.341px">Javadoc</div>
<div class="t" style="left:216px;top:643px;letter-spacing:-0.122px">Declaration</div>
<div class="a" style="left:164px;top:638px;width:1px;height:22px;background:#808080"></div>
<div class="a" style="left:212px;top:638px;width:1px;height:22px;background:#808080"></div>
<svg class="a" style="left:272px;top:637px" width="122" height="25" viewBox="0 0 122 25">
<defs><linearGradient id="gTabC" x1="0" y1="0" x2="0" y2="1"><stop offset="0" stop-color="#ffffff"/><stop offset=".35" stop-color="#fbfbfa"/><stop offset="1" stop-color="#d4d0c8"/></linearGradient></defs>
<path d="M4 24V5Q4 1 8 1H80C98 1 98 23.500 117 23.500V24.500H4z" fill="url(#gTabC)"/>
<path d="M0 23.500H3.500V5Q3.500 .5 8 .5H80C98 .5 98 23.500 117 23.500H122" fill="none" stroke="#808080"/>
<path d="M4 23.500H116" stroke="#d4d0c8" stroke-width="1.200"/>
</svg>
<svg class="a" style="left:281px;top:642px" width="13" height="14" viewBox="0 0 13 14">
<rect x=".7" y=".7" width="11.600" height="9.600" rx="1" fill="#dce8fa" stroke="#3a5ab0" stroke-width="1.400"/>
<path d="M3 4h5M3 6.500h7" stroke="#3a5ab0" stroke-width="1"/>
<path d="M5 10.500h3v2h-3zM2.500 13h8" stroke="#3a5ab0" stroke-width="1.200" fill="#3a5ab0"/></svg>
<div class="t" style="left:298px;top:643px;letter-spacing:-0.308px">Console</div>
<svg class="a" style="left:345px;top:644px" width="11" height="10" viewBox="0 0 11 10"><path d="M1 1h2.500l2 2.500 2-2.500H10v1.200L7.200 5 10 7.800V9H7.500l-2-2.500-2 2.500H1V7.800L3.800 5 1 2.200z" fill="#fff" stroke="#404040" stroke-width=".9"/></svg>
<div class="t" style="left:117px;top:663px;letter-spacing:0.097px">&lt;terminated&gt; Vorlage (2) [Java Application] C:\Programme\Java\j2re1.4.2_08\bin\javaw.exe (19.05.2006 13:26:53)</div>
<div class="a" style="left:116px;top:677px;width:1029px;height:1px;background:#808080"></div>
<div class="a" style="left:116px;top:678px;width:1012px;height:112px;background:#fff"></div>
<div class="code" style="left:117px;top:679px">f hat den Wert 32.013333333333215</div>
<div class="code" style="left:117px;top:707px">f hat den Wert 32.669999999999874</div>
<div class="code" style="left:117px;top:735px">f hat den Wert 33.33333333333321</div>
<div class="track" style="left:1128px;top:678px;width:16px;height:112px"></div>
<div class="sbtn" style="left:1128px;top:678px"><svg class="a" style="left:3px;top:5px" width="7" height="4"><path d="M0 4h7L3.500 0z" fill="#000"/></svg></div>
<div class="sbtn" style="left:1128px;top:767px;height:7px"></div>
<div class="sbtn" style="left:1128px;top:774px"><svg class="a" style="left:3px;top:5px" width="7" height="4"><path d="M0 0h7L3.500 4z" fill="#000"/></svg></div>
<div class="track" style="left:116px;top:790px;width:1012px;height:16px"></div>
<div class="sbtn" style="left:116px;top:790px"><svg class="a" style="left:4px;top:3px" width="4" height="7"><path d="M4 0v7L0 3.500z" fill="#808080"/></svg></div>
<div class="sbtn" style="left:1112px;top:790px"><svg class="a" style="left:5px;top:3px" width="4" height="7"><path d="M0 0v7L4 3.500z" fill="#808080"/></svg></div>
<div class="a" style="left:1128px;top:790px;width:17px;height:17px;background:#d4d0c8"></div>
<div class="a" style="left:911px;top:644px;width:10px;height:10px;background:#d8b8c0;border:1px solid #dcc8cc"></div>
<svg class="a" style="left:930px;top:641px" width="18" height="17" viewBox="0 0 18 17">
<path d="M2 1l6 6M8 1L2 7M5 0v8M1 4h8" stroke="#8a8a8a" stroke-width=".9"/>
<path d="M4.500 5.500l10 9M14.500 5.500l-10 9" stroke="#5c5c5c" stroke-width="4" stroke-linecap="round"/>
<path d="M4.500 5.500l10 9M14.500 5.500l-10 9" stroke="#8c8c8c" stroke-width="1.800" stroke-linecap="round"/></svg>
<div class="sep" style="left:954px;top:641px;height:18px"></div>
<svg class="a" style="left:960px;top:641px" width="18" height="17" viewBox="0 0 18 17">
<path d="M1.500 .5h7l3 3v11h-10z" fill="#fff" stroke="#8098c0" stroke-width=".9"/>
<path d="M3 4h5M3 6.500h7M3 9h7M3 11.500h4" stroke="#5a7ab8" stroke-width="1"/>
<path d="M9 9l7 7M16 9l-7 7" stroke="#505050" stroke-width="2.400"/></svg>
<svg class="a" style="left:983px;top:641px" width="18" height="18" viewBox="0 0 18 18">
<rect x="5.500" y=".5" width="11" height="15" fill="#e8f0fc" stroke="#a0b8e0"/>
<rect x="12.500" y="1.500" width="4" height="13" fill="#c8dcf4" stroke="#7a98d0" stroke-width=".8"/>
<rect x="13.500" y="4" width="2" height="2" fill="#2a4aa0"/><rect x="13.500" y="10" width="2" height="2" fill="#2a4aa0"/>
<path d="M3.500 10V7.500q0-3 2.500-3t2.500 3V10" fill="none" stroke="#c8a020" stroke-width="1.300"/>
<rect x="1.500" y="9.500" width="9" height="7" rx="1" fill="#fbd858" stroke="#b88a10"/>
<rect x="5" y="12" width="2" height="3" fill="#6a4a00"/></svg>
<div class="sep" style="left:1007px;top:641px;height:18px"></div>
<svg class="a" style="left:1015px;top:641px" width="18" height="17" viewBox="0 0 18 17">
<rect x="1.500" y="5.500" width="12" height="10" fill="#e8f0fc" stroke="#4a6cb0"/>
<rect x="1" y="5" width="13" height="3" fill="#2f5fb0"/>
<path d="M8 9l3-3 3 2 3.500-5-2.500-2.500-5 3.500 2 3z" fill="#3a9a4a" stroke="#1a5a24" stroke-width=".8"/></svg>
<svg class="a" style="left:1038px;top:642px" width="17" height="15" viewBox="0 0 17 15">
<rect x="1.200" y="1.200" width="14.600" height="10" rx="1" fill="#e4e4e4" stroke="#707070" stroke-width="1.400"/>
<path d="M4 5h5M4 7.500h8" stroke="#808080"/><path d="M6 11.500h5v2h-5zM3 14h11" stroke="#707070" stroke-width="1.200" fill="#707070"/></svg>
<svg class="a" style="left:1062px;top:648px" width="5" height="3"><path d="M0 0h5L2.500 3z" fill="#9a968e"/></svg>
<svg class="a" style="left:1074px;top:641px" width="17" height="17" viewBox="0 0 17 17">
<rect x="1.500" y="4.500" width="12" height="11" fill="url(#gWin)" stroke="#7f9fc8"/>
<rect x="1" y="4" width="13" height="3" fill="#2f5fb0"/>
<use href="#spark" x="10" y="0" width="7" height="7"/></svg>
<svg class="a" style="left:1098px;top:648px" width="5" height="3"><use href="#dd" width="5" height="3"/></svg>
<div class="a" style="left:1112px;top:642px;width:10px;height:4px;border:1px solid #404040;background:#fff"></div>
<div class="a" style="left:1130px;top:642px;width:10px;height:10px;border:1px solid #404040;border-top-width:2px;background:#fff"></div>
</div>
<div id="status">
<div class="a" style="left:5px;top:812px;width:55px;height:23px;border:1px solid #808080;border-bottom:none;border-radius:5px 5px 0 0"></div>
<div class="a" style="left:13px;top:816px;width:2px;height:16px;background:repeating-linear-gradient(180deg,#606060 0 1px,#fff 1px 2px,transparent 2px 4px)"></div>
<div class="sep" style="left:644px;top:813px;height:20px"></div>
<div class="sep" style="left:733px;top:813px;height:20px"></div>
<div class="sep" style="left:817px;top:813px;height:20px"></div>
<div class="sep" style="left:900px;top:813px;height:20px"></div>
<div class="t" style="left:651px;top:816px;letter-spacing:-0.020px">Writable</div>
<div class="t" style="left:739px;top:816px">Smart Insert</div>
<div class="t" style="left:824px;top:816px">1 : 21</div>
</div>


<!-- TASKBAR -->
<div id="taskbar">
<div class="a" style="left:0;top:835px;width:1152px;height:1px;background:#fff"></div>
<div class="btn" style="left:2px;top:838px;width:52px;height:22px"></div>
<svg class="a" style="left:4px;top:841px" width="16" height="16" viewBox="0 0 16 16">
<path d="M1.500 3.500q3-2 5.500 0l-1 4.500q-2.500-2-5.500 0z" fill="#e8502a"/>
<path d="M8.200 4q3 1.800 6 0l-1 4.500q-3 1.800-6 0z" fill="#5ab830"/>
<path d="M.8 9.200q3-2 5.500 0l-1 4.500q-2.500-2-5.500 0z" fill="#3a78d8"/>
<path d="M7 9.700q3 1.800 6 0l-1 4.500q-3 1.800-6 0z" fill="#f8c020"/></svg>
<div class="t" style="left:22px;top:842px;font-weight:bold;font-size:11.5px;letter-spacing:0.459px">Start</div>
<div class="btn" style="left:59px;top:838px;width:159px;height:22px"></div>
<svg class="a" style="left:63px;top:841px" width="16" height="16" viewBox="0 0 16 16">
<circle cx="8" cy="8" r="7" fill="#e87818"/><circle cx="8.500" cy="7.500" r="4" fill="#3a58c0"/>
<path d="M2 5q2-4 7-3.500 3 1 4 3.500-3-2-5-1 0 2-2 3 .5 2 3 2.500-4 1.500-6-1.500-1.500-1.500-1-3z" fill="#f8a030"/></svg>
<div class="t" style="left:82px;top:842px;letter-spacing:-0.157px">Webmail :: INBOX - Mozill...</div>
<div class="a" style="left:222px;top:838px;width:160px;height:22px;background:#eae8e3;border:1px solid;border-color:#404040 #fff #fff #404040;box-shadow:inset 1px 1px 0 #808080"></div>
<svg class="a" style="left:228px;top:842px" width="15" height="15" viewBox="0 0 16 16">
<circle cx="8" cy="8" r="7.500" fill="url(#eg)"/>
<rect x="1" y="6" width="14" height="1" fill="#e8e6f8"/><rect x="1" y="8" width="14" height="1" fill="#e8e6f8"/><rect x="2" y="10" width="12" height="1" fill="#cfcbee"/></svg>
<div class="t" style="left:247px;top:843px;font-weight:bold;font-size:11.5px;letter-spacing:0.239px">Java - Vorlage.java - ...</div>
<div class="btn" style="left:385px;top:838px;width:159px;height:22px"></div>
<svg class="a" style="left:389px;top:841px" width="16" height="16" viewBox="0 0 16 16">
<circle cx="8" cy="8" r="7.200" fill="#1a7a8a" stroke="#404848" stroke-width="1.200"/>
<circle cx="8" cy="8" r="5.500" fill="#2a98a8" stroke="#e0f0f0" stroke-width=".8"/>
<text x="4.300" y="11.500" font-family="Liberation Serif,serif" font-weight="bold" font-size="10" fill="#fff">N</text></svg>
<div class="t" style="left:408px;top:842px;letter-spacing:-0.111px">Netscape</div>
<div class="btn" style="left:548px;top:838px;width:159px;height:22px"></div>
<svg class="a" style="left:552px;top:842px" width="16" height="14" viewBox="0 0 16 14">
<path d="M.7 2.500q0-1.500 1.500-1.500h3.500l1.500 1.500h7q1.500 0 1.500 1.500v7.500q0 1.500-1.500 1.500h-12q-1.500 0-1.500-1.500z" fill="#f8e080" stroke="#a88818" stroke-width=".9"/>
<path d="M1.500 5h13" stroke="#fff8c8" stroke-width="1"/></svg>
<div class="t" style="left:572px;top:842px;letter-spacing:-1.211px">TMP</div>
<div class="btn" style="left:711px;top:838px;width:159px;height:22px"></div>
<svg class="a" style="left:715px;top:840px" width="16" height="18" viewBox="0 0 16 18">
<path d="M4 8h9l-1 9h-7z" fill="#d8c8a8" stroke="#806840" stroke-width=".8"/>
<path d="M5.500 9L2 1M8 9V0M11 9l3-7" stroke="#c03020" stroke-width="1.400"/>
<path d="M7 9L5 2" stroke="#3a9a4a" stroke-width="1.300"/><path d="M9.500 9l1.500-8" stroke="#e8b020" stroke-width="1.300"/>
<path d="M5 12h7" stroke="#4a78c0" stroke-width="1.500"/></svg>
<div class="t" style="left:734px;top:842px;letter-spacing:-0.069px">Unbenannt - Paint</div>
<div class="a" style="left:1028px;top:842px;width:16px;height:16px;background:#0a246a"></div>
<div class="t" style="left:1030px;top:843px;color:#fff;font-size:10px;letter-spacing:-0.6px">DE</div>
<div class="sep" style="left:1049px;top:838px;height:22px"></div>
<div class="a" style="left:1055px;top:838px;width:94px;height:22px;border:1px solid;border-color:#808080 #fff #fff #808080"></div>
<div class="t" style="left:1060px;top:841px;font-weight:bold;font-size:12px">«</div>
<svg class="a" style="left:1073px;top:842px" width="16" height="16" viewBox="0 0 16 16">
<g fill="#2aa82a" stroke="#107010" stroke-width=".7"><circle cx="8" cy="3.300" r="2.800"/><circle cx="12.300" cy="5.800" r="2.800"/><circle cx="11.300" cy="11" r="2.800"/><circle cx="4.700" cy="11" r="2.800"/><circle cx="3.700" cy="5.800" r="2.800"/><circle cx="8" cy="13" r="2.600"/></g>
<circle cx="8" cy="8" r="2" fill="#f8e020"/></svg>
<svg class="a" style="left:1091px;top:842px" width="15" height="16" viewBox="0 0 15 16">
<path d="M.7 .7h13.600v7q0 5-6.800 7.600-6.800-2.600-6.800-7.600z" fill="#8a98e0" stroke="#4a58b0" stroke-width=".9"/>
<path d="M8 1v14" stroke="#c8d0f8" stroke-width="1.500"/><path d="M1.500 4h5.500M1.500 7h5.500M2.500 10h4.500" stroke="#e0e4fc" stroke-width="1"/></svg>
<div class="t" style="left:1113px;top:842px;font-size:11.5px;letter-spacing:-0.096px">13:26</div>
</div>

</body>
</html>
